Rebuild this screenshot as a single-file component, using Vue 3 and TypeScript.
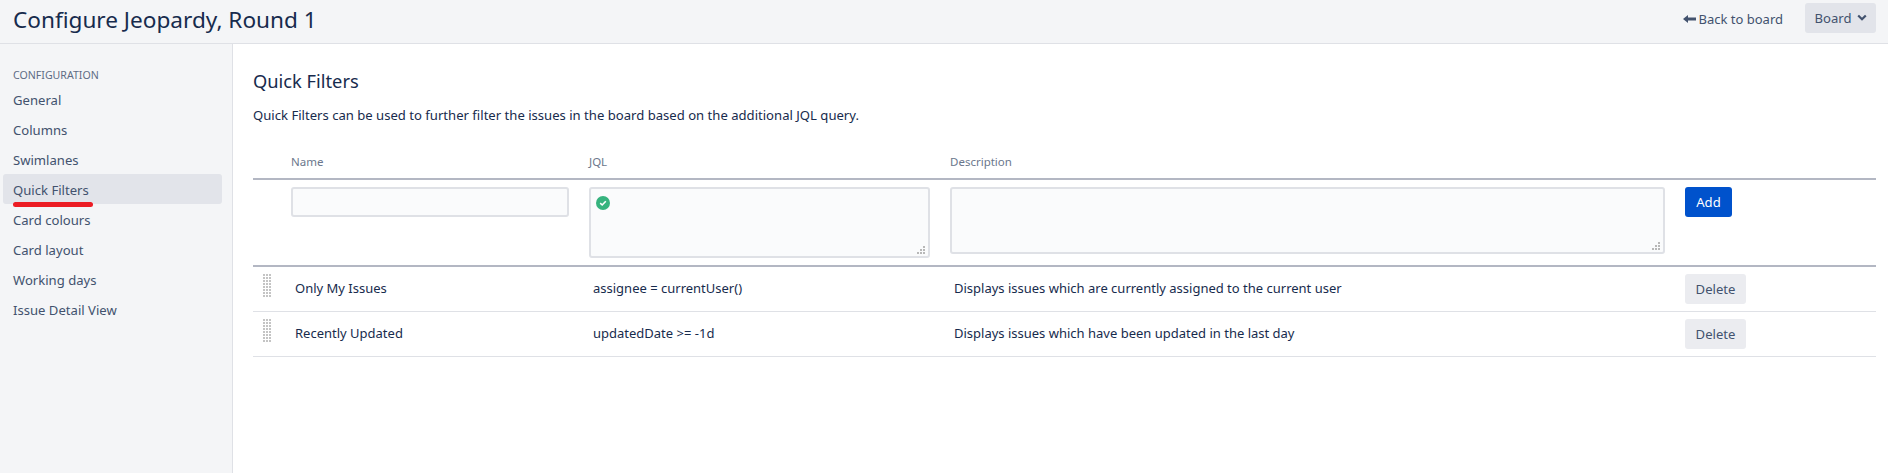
<script setup lang="ts">
const nav: string[] = ['General', 'Columns', 'Swimlanes', 'Quick Filters', 'Card colours', 'Card layout', 'Working days', 'Issue Detail View']
const rows = [
  { name: 'Only My Issues', jql: 'assignee = currentUser()', desc: 'Displays issues which are currently assigned to the current user' },
  { name: 'Recently Updated', jql: 'updatedDate >= -1d', desc: 'Displays issues which have been updated in the last day' },
]
const dragDots: { x: number; y: number }[] = []
for (let r = 0; r < 8; r++) {
  for (let c = 0; c < 3; c++) dragDots.push({ x: c * 3, y: r * 3 })
}
const gripDots = [
  { x: 6, y: 0 },
  { x: 3, y: 3 }, { x: 6, y: 3 },
  { x: 0, y: 6 }, { x: 3, y: 6 }, { x: 6, y: 6 },
]
</script>

<template>
  <div class="page">
    <header class="top">
      <h1>Configure Jeopardy, Round 1</h1>
      <div class="top-actions">
        <a class="back">
          <svg width="13" height="10" viewBox="0 0 13 10"><path d="M0 5 5 1v2.5h8v3H5V9z" fill="#42526e" /></svg>Back to board
        </a>
        <button class="board-btn">Board
          <svg width="10" height="8" viewBox="0 0 10 8"><path d="M1.2 1.5 5 5.3l3.8-3.8" fill="none" stroke="#42526e" stroke-width="2.2" /></svg>
        </button>
      </div>
    </header>
    <div class="body">
      <aside class="side">
        <div class="side-title">CONFIGURATION</div>
        <div v-for="n in nav" :key="n" class="nav-item" :class="{ active: n === 'Quick Filters' }">
          {{ n }}
          <span v-if="n === 'Quick Filters'" class="underline"></span>
        </div>
      </aside>
      <main class="main">
        <h2>Quick Filters</h2>
        <p class="intro">Quick Filters can be used to further filter the issues in the board based on the additional JQL query.</p>
        <div class="table">
          <div class="grid head">
            <div></div><div class="th">Name</div><div class="th">JQL</div><div class="th">Description</div><div></div>
          </div>
          <div class="grid add">
            <div></div>
            <div><div class="input"></div></div>
            <div>
              <div class="area jql">
                <svg class="check" width="14" height="14" viewBox="0 0 14 14"><circle cx="7" cy="7" r="7" fill="#36b37e" /><path d="M4.2 7.2 6.2 9l3.6-3.8" fill="none" stroke="#fff" stroke-width="1.6" /></svg>
                <svg class="grip" width="8" height="8" viewBox="0 0 8 8"><rect v-for="(d, i) in gripDots" :key="i" :x="d.x" :y="d.y" width="2" height="2" fill="#b8b8b8" /></svg>
              </div>
            </div>
            <div>
              <div class="area desc">
                <svg class="grip" width="8" height="8" viewBox="0 0 8 8"><rect v-for="(d, i) in gripDots" :key="i" :x="d.x" :y="d.y" width="2" height="2" fill="#b8b8b8" /></svg>
              </div>
            </div>
            <div><button class="btn primary">Add</button></div>
          </div>
          <div v-for="r in rows" :key="r.name" class="grid row">
            <div class="drag">
              <svg width="8" height="23" viewBox="0 0 8 23"><rect v-for="(d, i) in dragDots" :key="i" :x="d.x" :y="d.y" width="2" height="2" fill="#c4c4c4" /></svg>
            </div>
            <div class="cell">{{ r.name }}</div>
            <div class="cell">{{ r.jql }}</div>
            <div class="cell">{{ r.desc }}</div>
            <div><button class="btn del">Delete</button></div>
          </div>
        </div>
      </main>
    </div>
  </div>
</template>

<style>
html, body { margin: 0; background: #fff; }
</style>

<style scoped>
.page { width: 1888px; height: 473px; overflow: hidden; display: flex; flex-direction: column; font-family: "Noto Sans", "Open Sans", sans-serif; font-size: 13.1px; color: #172b4d; }
.top { height: 43px; flex: none; background: #f4f5f7; border-bottom: 1px solid #dfe1e6; display: flex; justify-content: space-between; padding: 0 12px 0 13px; }
h1 { margin: 0; font-size: 22.6px; font-weight: 400; line-height: 40px; }
.top-actions { display: flex; align-items: center; gap: 22px; height: 30px; margin-top: 3px; }
.back { display: flex; align-items: center; gap: 2px; padding-top: 2px; color: #42526e; font-size: 13px; }
.board-btn { height: 30px; width: 71px; border: 0; border-radius: 3px; background: #e2e4ea; color: #42526e; font: inherit; padding: 0 0 0 1px; display: flex; align-items: center; justify-content: center; gap: 6px; }
.body { flex: 1; display: flex; min-height: 0; }
.side { width: 233px; flex: none; box-sizing: border-box; background: #f4f5f7; border-right: 1px solid #dfe1e6; padding: 24px 10px 0 3px; }
.side-title { font-size: 10.6px; color: #5e6c84; line-height: 14px; padding-left: 10px; margin-bottom: 2px; }
.nav-item { position: relative; height: 30px; line-height: 32px; padding-left: 10px; border-radius: 3px; color: #42526e; }
.nav-item.active { background: #e2e4ea; }
.underline { position: absolute; left: 10px; top: 28px; width: 80px; height: 5px; border-radius: 3px; background: #ec1c24; }
.main { flex: 1; padding: 23px 12px 0 20px; min-width: 0; }
h2 { margin: 0; font-size: 18.3px; font-weight: 400; line-height: 28px; }
.intro { margin: 10px 0 0; line-height: 20px; }
.table { margin-top: 17px; }
.grid { display: grid; grid-template-columns: 38px 298px 361px 735px 191px; }
.head { height: 38px; padding-top: 3px; border-bottom: 2px solid #b3b7c3; align-items: center; box-sizing: border-box; }
.th { font-size: 11.5px; color: #6b778c; }
.add { height: 87px; box-sizing: border-box; border-bottom: 2px solid #b3b7c3; padding-top: 7px; }
.input { width: 278px; height: 30px; box-sizing: border-box; background: #fafbfc; border: 2px solid #dfe1e6; border-radius: 3px; }
.area { position: relative; box-sizing: border-box; background: #fafbfc; border: 2px solid #dfe1e6; border-radius: 3px; }
.jql { width: 341px; height: 71px; }
.desc { width: 715px; height: 67px; }
.check { position: absolute; left: 5px; top: 7px; }
.grip { position: absolute; right: 3px; bottom: 2px; }
.btn { height: 30px; width: 47px; padding: 0; border: 0; border-radius: 3px; background: #ebecf0; color: #42526e; font: inherit; display: block; }
.btn.primary { background: #0052cc; color: #fff; }
.btn.del { width: 61px; }
.row { height: 45px; box-sizing: border-box; border-bottom: 1px solid #dfe1e6; align-items: center; }
.cell { padding: 0 0 2px 4px; font-size: 13px; }
.drag { height: 100%; padding: 7px 0 0 10px; box-sizing: border-box; }
.drag svg { display: block; }
</style>
